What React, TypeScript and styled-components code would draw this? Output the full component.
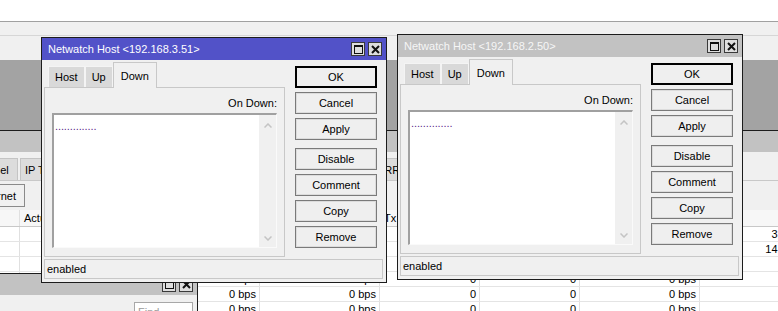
import styled, { createGlobalStyle } from 'styled-components';

const GlobalStyle = createGlobalStyle`
  html, body { margin: 0; padding: 0; background: #fff; }
  body { font-family: "Liberation Sans", Arial, sans-serif; font-size: 11px; color: #000; }
  * { box-sizing: border-box; }
`;

const Desktop = styled.div`
  position: relative;
  width: 778px;
  height: 311px;
  overflow: hidden;
  display: flex;
  flex-direction: column;
  background: #fff;
`;

const MenuBar = styled.div`
  flex: none;
  height: 22px;
  background: #fff;
  border-bottom: 1px solid #a0a0a0;
`;

const ToolStrip = styled.div`
  flex: none;
  height: 38px;
  background: #f0f0f0;
`;

const ToolRow = styled.div`
  height: 14px;
  border-bottom: 1px solid #d6d6d6;
`;

const Workspace = styled.div`
  flex: 1;
  background: #a3a3a3;
`;

// windows sit on the desktop canvas at their own coordinates
const Win = styled.div<{ $x: number; $y: number; $w: number; $z: number }>`
  position: absolute;
  left: ${p => p.$x}px;
  top: ${p => p.$y}px;
  width: ${p => p.$w}px;
  z-index: ${p => p.$z};
  background: #f0f0f0;
  border: 1px solid #1c1c1c;
  display: flex;
  flex-direction: column;
`;

const TitleBar = styled.div<{ $active?: boolean; $h?: number }>`
  flex: none;
  height: ${p => p.$h || 22}px;
  background: ${p => (p.$active ? '#5252c8' : '#c2c2c2')};
  color: ${p => (p.$active ? '#fff' : '#f6f6f6')};
  display: flex;
  align-items: center;
  justify-content: space-between;
  padding: 0 4px 0 6px;
  white-space: nowrap;
`;

const TitleButtons = styled.div`
  display: flex;
  gap: 3px;
`;

const TitleButton = styled.div`
  width: 14px;
  height: 14px;
  border: 1px solid #3a3a3a;
  background: #dedede;
  display: flex;
  align-items: center;
  justify-content: center;
`;

const Body = styled.div`
  display: flex;
  flex-direction: column;
  padding: 0 0 3px 0;
`;

const Main = styled.div`
  display: flex;
  gap: 10px;
  padding-left: 2px;
`;

const LeftCol = styled.div`
  width: 241px;
  display: flex;
  flex-direction: column;
`;

const TabRow = styled.div`
  display: flex;
  align-items: flex-end;
  padding-left: 4px;
  margin-top: 2px;
  height: 25px;
`;

const Tab = styled.div<{ $selected?: boolean }>`
  height: ${p => (p.$selected ? 26 : 21)}px;
  padding: 0 ${p => (p.$selected ? 7 : 6)}px;
  display: flex;
  align-items: center;
  background: ${p => (p.$selected ? '#f0f0f0' : '#d9d9d9')};
  border: 1px solid ${p => (p.$selected ? '#c8c8c8' : '#f4f4f4')};
  border-bottom: none;
  margin-bottom: ${p => (p.$selected ? -1 : 0)}px;
  position: relative;
  z-index: ${p => (p.$selected ? 1 : 0)};
`;

const Panel = styled.div`
  height: 170px;
  border: 1px solid #c8c8c8;
  padding: 0 7px 8px 7px;
  display: flex;
  flex-direction: column;
`;

const FieldLabel = styled.div`
  height: 25px;
  display: flex;
  align-items: flex-end;
  justify-content: flex-end;
  padding-bottom: 3px;
  line-height: 13px;
`;

const TextBox = styled.div`
  flex: 1;
  display: flex;
  background: #fff;
  border-top: 2px solid #a0a0a0;
  border-left: 2px solid #a0a0a0;
  border-right: 1px solid #fafafa;
  border-bottom: 1px solid #fafafa;
`;

const TextArea = styled.div`
  flex: 1;
  padding: 5px 1px;
  line-height: 13px;
  color: #5b2a8c;
  letter-spacing: -0.1px;
`;

const ScrollCol = styled.div`
  width: 17px;
  background: #f0f0f0;
  display: flex;
  flex-direction: column;
  justify-content: space-between;
  align-items: center;
  padding: 8px 0 6px;
`;

const ButtonCol = styled.div`
  width: 82px;
  padding-top: 6px;
  display: flex;
  flex-direction: column;
  gap: 4px;
`;

const Button = styled.div<{ $default?: boolean; $gapBefore?: boolean }>`
  height: 22px;
  display: flex;
  align-items: center;
  justify-content: center;
  background: #efefef;
  border: 1px solid ${p => (p.$default ? '#000' : '#7a7a7a')};
  box-shadow: inset 0 0 0 1px ${p => (p.$default ? '#000' : '#dcdcdc')};
  margin-top: ${p => (p.$gapBefore ? 4 : 0)}px;
`;

const StatusBar = styled.div`
  margin: 2px 3px 0 2px;
  height: 20px;
  border: 1px solid #c8c8c8;
  display: flex;
  align-items: center;
  padding-left: 2px;
`;

/* background interface list */
const ListBody = styled.div`
  padding-left: 4px;
  height: 200px;
`;

const ListTabs = styled.div`
  display: flex;
  gap: 2px;
  margin-top: 6px;
  height: 22px;
`;

const ListTab = styled.div<{ $w: number }>`
  width: ${p => p.$w}px;
  flex: none;
  padding-left: 4px;
  display: flex;
  align-items: center;
  background: #dcdcdc;
  border: 1px solid #c4c4c4;
  border-bottom: none;
  white-space: nowrap;
  overflow: hidden;
`;

const ListToolbar = styled.div`
  height: 30px;
  border-top: 1px solid #c8c8c8;
  padding-top: 3px;
  display: flex;
`;

const ToolButton = styled.div<{ $w: number }>`
  width: ${p => p.$w}px;
  height: 23px;
  border: 1px solid #8a8a8a;
  background: #f0f0f0;
  display: flex;
  align-items: center;
  justify-content: flex-end;
  padding-right: 8px;
  white-space: nowrap;
  overflow: hidden;
`;

const Table = styled.div`
  background: #fff;
  margin-left: -4px;
  padding-left: 4px;
`;

const Row = styled.div<{ $head?: boolean }>`
  display: flex;
  height: ${p => (p.$head ? 17 : 15)}px;
  background: ${p => (p.$head ? '#f7f7f7' : '#fff')};
  border-bottom: 1px solid ${p => (p.$head ? '#c8c8c8' : '#e4e4e4')};
`;

const Cell = styled.div<{ $w: number; $right?: boolean }>`
  width: ${p => p.$w}px;
  flex: none;
  border-right: 1px solid #e0e0e0;
  padding: 0 3px 0 4px;
  display: flex;
  align-items: center;
  justify-content: ${p => (p.$right ? 'flex-end' : 'flex-start')};
  white-space: nowrap;
  overflow: hidden;
`;

const FindBar = styled.div`
  display: flex;
  justify-content: flex-end;
  padding: 7px 4px 0 0;
  height: 40px;
`;

const FindInput = styled.div`
  width: 59px;
  height: 20px;
  background: #fff;
  border: 1px solid #a8a8a8;
  color: #9a9a9a;
  padding-left: 3px;
  display: flex;
  align-items: center;
`;

const MaxIcon = () => (
  <svg width="9" height="9" viewBox="0 0 9 9">
    <rect x="0.5" y="0.5" width="8" height="8" fill="none" stroke="#111" />
    <rect x="0" y="0" width="9" height="2" fill="#111" />
  </svg>
);

const CloseIcon = () => (
  <svg width="9" height="9" viewBox="0 0 9 9">
    <path d="M1 1L8 8M8 1L1 8" stroke="#111" strokeWidth="2" />
  </svg>
);

const Chevron = ({ down }: { down?: boolean }) => (
  <svg width="8" height="5" viewBox="0 0 8 5">
    <path d={down ? 'M0.5 0.5L4 4L7.5 0.5' : 'M0.5 4.5L4 1L7.5 4.5'} stroke="#c4c4c4" strokeWidth="1.5" fill="none" />
  </svg>
);

const WinControls = () => (
  <TitleButtons>
    <TitleButton><MaxIcon /></TitleButton>
    <TitleButton><CloseIcon /></TitleButton>
  </TitleButtons>
);

const NetwatchWindow = ({ x, y, z, title, active }: any) => (
  <Win $x={x} $y={y} $w={346} $z={z}>
    <TitleBar $active={active}>
      <span>{title}</span>
      <WinControls />
    </TitleBar>
    <Body>
      <Main>
        <LeftCol>
          <TabRow>
            <Tab>Host</Tab>
            <Tab>Up</Tab>
            <Tab $selected>Down</Tab>
          </TabRow>
          <Panel>
            <FieldLabel>On Down:</FieldLabel>
            <TextBox>
              <TextArea>..............</TextArea>
              <ScrollCol>
                <Chevron />
                <Chevron down />
              </ScrollCol>
            </TextBox>
          </Panel>
        </LeftCol>
        <ButtonCol>
          <Button $default>OK</Button>
          <Button>Cancel</Button>
          <Button>Apply</Button>
          <Button $gapBefore>Disable</Button>
          <Button>Comment</Button>
          <Button>Copy</Button>
          <Button>Remove</Button>
        </ButtonCol>
      </Main>
      <StatusBar>enabled</StatusBar>
    </Body>
  </Win>
);

const tabs = [
  { label: 'EoIP Tunnel', w: 74 },
  { label: 'IP Tunnel', w: 60 },
  { label: 'GRE Tunnel', w: 74 },
  { label: 'VLAN', w: 44 },
  { label: 'Bonding', w: 58 },
  { label: 'LTE', w: 36 },
  { label: '6to4 Tunnel', w: 68 },
  { label: 'VRRP', w: 50 },
  { label: 'VXLAN', w: 56 },
];

const columns = [
  { head: 'Name', w: 76 },
  { head: 'Actual MTU', w: 120 },
  { head: 'Tx', w: 120 },
  { head: 'Rx', w: 120 },
  { head: 'Tx Packet (p/s)', w: 100 },
  { head: 'Rx Packet (p/s)', w: 100 },
  { head: 'FP Tx', w: 120 },
  { head: 'FP Rx', w: 117 },
];

// the first rows lie under the two dialogs, only their last column shows
const rows = [
  ['', '', '', '', '', '', '', '3.1 kbps'],
  ['', '', '', '', '', '', '', '14.2 kbps'],
  ['', '', '', '', '', '', '', ''],
  ['', '', '0 bps', '0 bps', '0', '0', '0 bps', ''],
  ['', '', '0 bps', '0 bps', '0', '0', '0 bps', ''],
  ['', '', '0 bps', '0 bps', '0', '0', '0 bps', ''],
];

const InterfaceList = () => (
  <Win $x={-61} $y={130} $w={900} $z={1}>
    <TitleBar $h={21} />
    <ListBody>
      <ListTabs>
        {tabs.map(t => <ListTab key={t.label} $w={t.w}>{t.label}</ListTab>)}
      </ListTabs>
      <ListToolbar>
        <ToolButton $w={81}>Detect Internet</ToolButton>
      </ListToolbar>
      <Table>
        <Row $head>
          {columns.map(c => <Cell key={c.head} $w={c.w}>{c.head}</Cell>)}
        </Row>
        {rows.map((r, i) => (
          <Row key={i}>
            {r.map((v, j) => <Cell key={j} $w={columns[j].w} $right>{v}</Cell>)}
          </Row>
        ))}
      </Table>
    </ListBody>
  </Win>
);

const App = () => (
  <>
    <GlobalStyle />
    <Desktop>
      <MenuBar />
      <ToolStrip>
        <ToolRow />
      </ToolStrip>
      <Workspace />
      <InterfaceList />
      <Win $x={-30} $y={273} $w={228} $z={2}>
        <TitleBar $h={21}>
          <span />
          <WinControls />
        </TitleBar>
        <FindBar>
          <FindInput>Find</FindInput>
        </FindBar>
      </Win>
      <NetwatchWindow x={397} y={34} z={3} title="Netwatch Host <192.168.2.50>" />
      <NetwatchWindow x={41} y={37} z={4} title="Netwatch Host <192.168.3.51>" active />
    </Desktop>
  </>
);

export default App;
